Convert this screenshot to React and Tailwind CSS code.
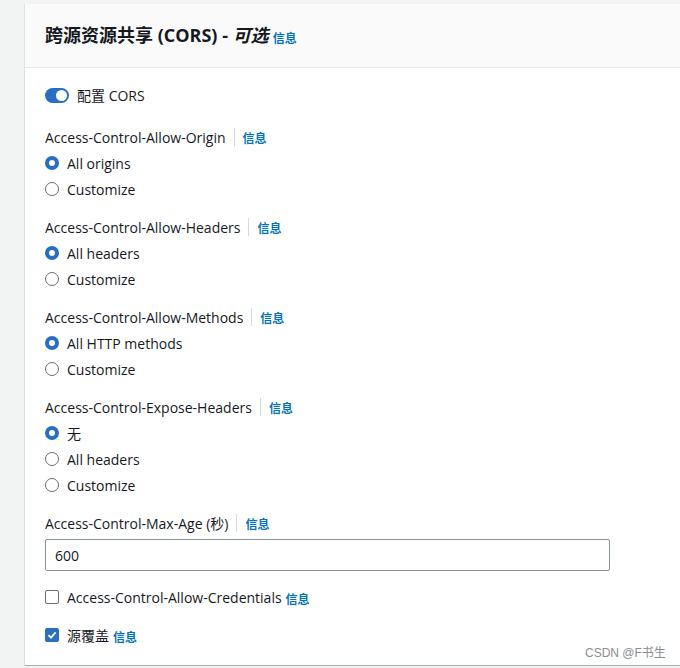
import React from "react";

const font = { fontFamily: '"Open Sans", "Noto Sans CJK SC", sans-serif' };

function Info({ className = "" }) {
  return <span className={"text-[12px] font-bold text-[#0073bb] " + className}>信息</span>;
}

function Label({ children }) {
  return (
    <div className="flex items-center h-[20px] text-[14px] text-[#16191f]">
      <span>{children}</span>
      <span className="mx-[8px] w-px h-[18px] bg-[#d5dbdb]" />
      <Info className="relative top-[2px]" />
    </div>
  );
}

function Radio({ checked, children }) {
  return (
    <div className="flex items-center h-[26px] text-[14px] text-[#16191f]">
      {checked ? (
        <span className="w-[14px] h-[14px] rounded-full border-[4px] border-[#2a6ec1] bg-white box-border" />
      ) : (
        <span className="w-[14px] h-[14px] rounded-full border border-[#687078] bg-white box-border" />
      )}
      <span className="ml-[8px]">{children}</span>
    </div>
  );
}

function Group({ label, options }) {
  return (
    <div className="flex flex-col">
      <Label>{label}</Label>
      <div className="mt-[3px] flex flex-col">
        {options.map((o, i) => (
          <Radio key={i} checked={i === 0}>
            {o}
          </Radio>
        ))}
      </div>
    </div>
  );
}

export default function App() {
  return (
    <div className="w-[680px] h-[668px] bg-[#f2f3f3] overflow-hidden relative" style={font}>
      <div className="ml-[24px] mt-[4px] h-[662px] bg-white border-l border-[#dde1e1] border-b border-b-[#a9b0b0] flex flex-col">
        <div className="h-[64px] bg-[#fafafa] border-b border-[#e4e8e8] flex items-center pl-[20px] pb-[1px]">
          <span className="text-[18px] font-bold text-[#16191f]">
            跨源资源共享 (CORS) - <i>可选</i>
          </span>
          <span className="ml-[4px] mt-[3px]">
            <Info />
          </span>
        </div>
        <div className="pl-[20px] pt-[17px] flex flex-col">
          <div className="flex items-center h-[20px] text-[14px] text-[#16191f]">
            <span className="w-[24px] h-[15px] rounded-full bg-[#2a6ec1] relative">
              <span className="absolute right-[2px] top-[2px] w-[11px] h-[11px] rounded-full bg-white" />
            </span>
            <span className="ml-[8px]">配置 CORS</span>
          </div>
          <div className="mt-[22px] flex flex-col gap-[15px]">
            <Group label="Access-Control-Allow-Origin" options={["All origins", "Customize"]} />
            <Group label="Access-Control-Allow-Headers" options={["All headers", "Customize"]} />
            <Group label="Access-Control-Allow-Methods" options={["All HTTP methods", "Customize"]} />
            <Group label="Access-Control-Expose-Headers" options={["无", "All headers", "Customize"]} />
            <div className="flex flex-col">
              <Label>Access-Control-Max-Age (秒)</Label>
              <div className="mt-[6px] w-[565px] h-[32px] border border-[#879596] rounded-[2px] flex items-center pl-[9px] text-[14px] text-[#16191f]">
                600
              </div>
            </div>
          </div>
          <div className="mt-[16px] flex items-center h-[20px] text-[14px] text-[#16191f]">
            <span className="w-[14px] h-[14px] border border-[#687078] rounded-[2px] bg-white box-border" />
            <span className="ml-[8px]">Access-Control-Allow-Credentials</span>
            <span className="ml-[4px] relative top-[1px]">
              <Info />
            </span>
          </div>
          <div className="mt-[18px] flex items-center h-[20px] text-[14px] text-[#16191f]">
            <span className="w-[14px] h-[14px] rounded-[2px] bg-[#2a6ec1] flex items-center justify-center">
              <svg width="10" height="10" viewBox="0 0 10 10">
                <path d="M1.5 5.2 L4 7.6 L8.6 2.4" fill="none" stroke="white" strokeWidth="1.8" />
              </svg>
            </span>
            <span className="ml-[8px]">源覆盖</span>
            <span className="ml-[4px] relative top-[1px]">
              <Info />
            </span>
          </div>
        </div>
      </div>
      <div
        className="absolute left-[585px] top-[644px] text-[12px] text-[#8a8f94]"
        style={{ fontFamily: '"Liberation Sans", "Noto Sans CJK SC", sans-serif' }}
      >
        CSDN @F书生
      </div>
    </div>
  );
}
